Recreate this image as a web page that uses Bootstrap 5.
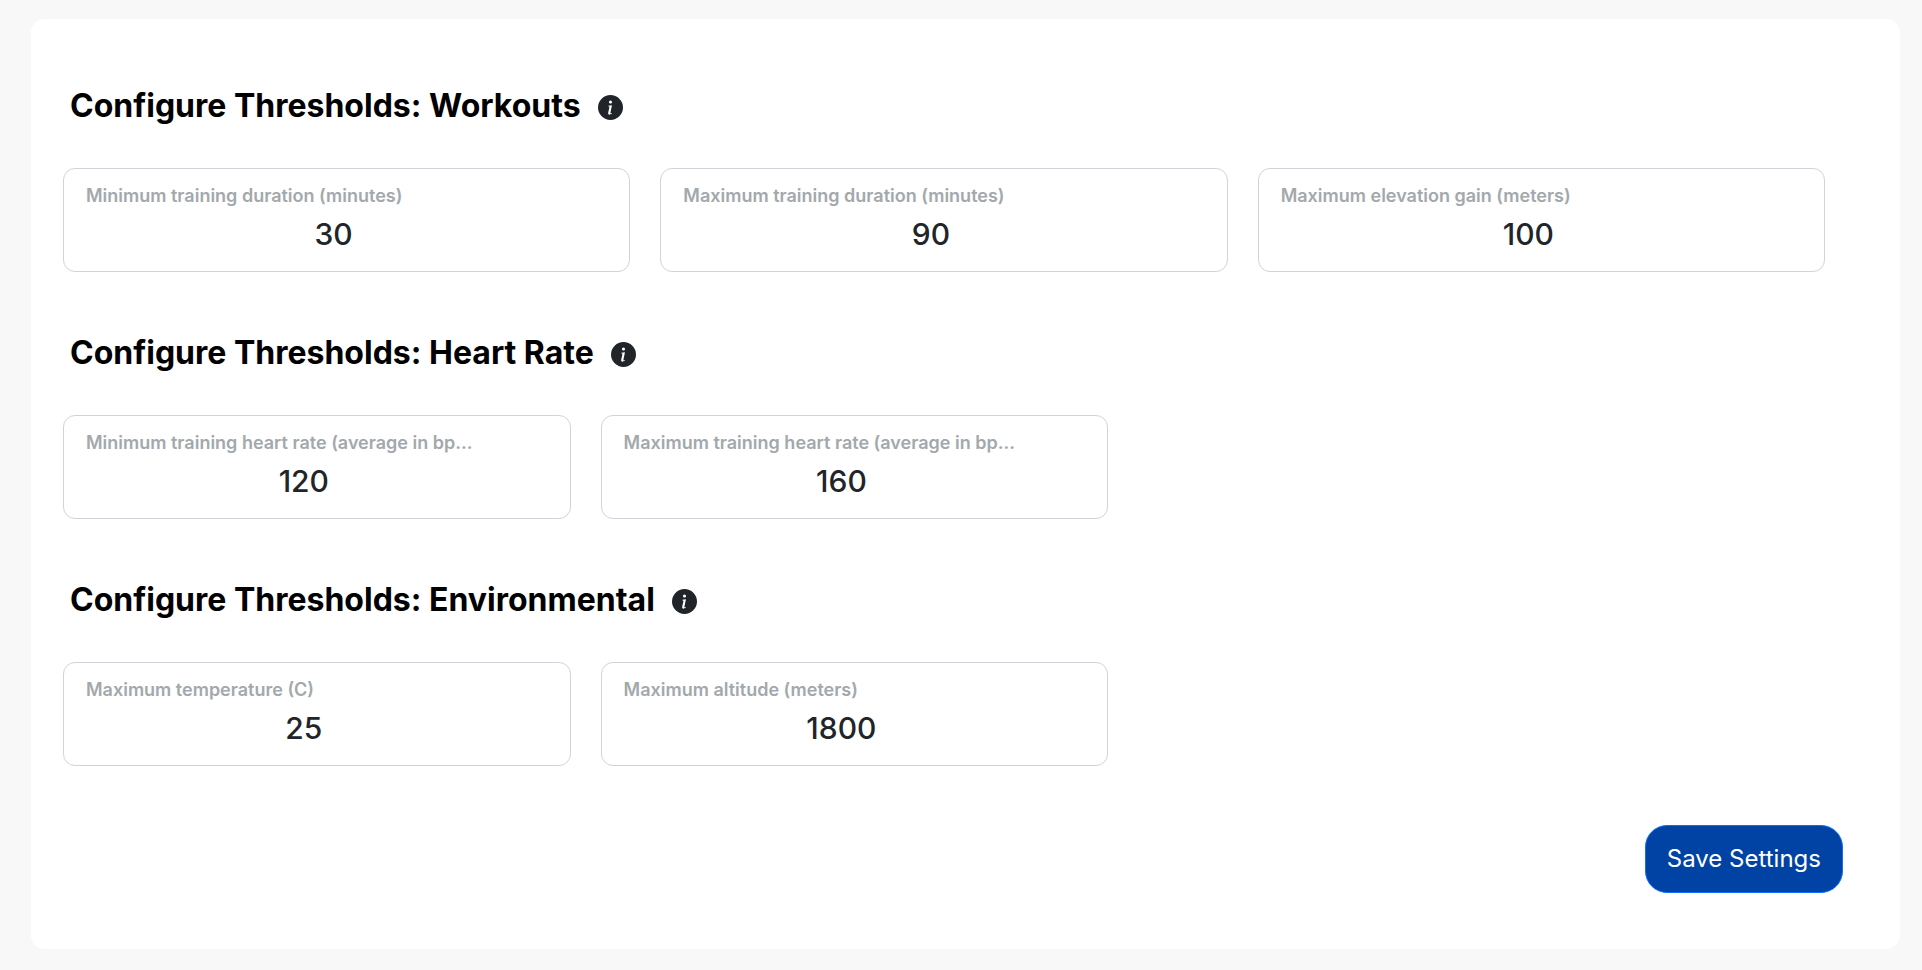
<!DOCTYPE html>
<html lang="en">
<head>
<meta charset="utf-8">
<meta name="viewport" content="width=device-width, initial-scale=1">
<title>Configure Thresholds</title>
<link href="https://cdn.jsdelivr.net/npm/bootstrap@5.3.0/dist/css/bootstrap.min.css" rel="stylesheet">
<style>
  body { background: #f8f8f8; font-family: Inter, "Liberation Sans", sans-serif; color: #212529; }
  .page { padding: 19px 22px 22px 31px; }
  .panel { background: #fff; border-radius: 14px; padding: 65px 57px 56px 32px; }
  .threshold-group { margin: 0 18px 59px 0; }
  .group-title { font-size: 32px; line-height: 44px; font-weight: 650; color: #000; margin: 0 7px 40px; gap: 17px; }
  .group-title svg { margin-top: 2px; }
  .threshold-row { --bs-gutter-x: 30px; --bs-gutter-y: 16px; }
  .field { border: 1px solid #ced4da; border-radius: 12px; padding: 15px 22px; }
  .field label { display: block; font-size: 18px; line-height: 24px; font-weight: 600; color: #a3a8ac; }
  .field input { font-size: 30px; line-height: 44px; height: 44px; font-weight: 500; color: #212529; margin-top: 4px; padding: 0 26px 0 0; border: 0; border-radius: 0; text-align: center; -moz-appearance: textfield; }
  .field input::-webkit-inner-spin-button { -webkit-appearance: none; margin: 0; }
  .btn-save { --bs-btn-bg: #0043a4; --bs-btn-border-color: #0d6efd; --bs-btn-padding-x: 21px; --bs-btn-padding-y: 15px; --bs-btn-border-radius: 22px; --bs-btn-font-size: 24px; --bs-btn-line-height: 36px; line-height: 36px; }
  @media (min-width: 992px) { .col-threshold { flex: 0 0 auto; width: 30%; } }
</style>
</head>
<body>
<svg class="d-none" xmlns="http://www.w3.org/2000/svg">
  <symbol id="info" viewBox="0 0 16 16"><path d="M8 16A8 8 0 1 0 8 0a8 8 0 0 0 0 16zm.93-9.412-1 4.705c-.07.34.029.533.304.533.194 0 .487-.07.686-.246l-.088.416c-.287.346-.92.598-1.465.598-.703 0-1.002-.422-.808-1.319l.738-3.468c.064-.293.006-.399-.287-.47l-.451-.081.082-.381 2.29-.287zM8 5.5a1 1 0 1 1 0-2 1 1 0 0 1 0 2z"/></symbol>
</svg>
<main class="page">
  <form class="panel">
    <section class="threshold-group">
      <h2 class="group-title d-flex align-items-center">Configure Thresholds: Workouts
        <svg class="text-dark" width="25" height="25" fill="currentColor" role="img" aria-label="Info"><use href="#info"/></svg></h2>
      <div class="row threshold-row">
        <div class="col-12 col-lg-4"><div class="field"><label class="text-truncate" for="minDuration">Minimum training duration (minutes)</label><input class="form-control" type="number" id="minDuration" value="30"></div></div>
        <div class="col-12 col-lg-4"><div class="field"><label class="text-truncate" for="maxDuration">Maximum training duration (minutes)</label><input class="form-control" type="number" id="maxDuration" value="90"></div></div>
        <div class="col-12 col-lg-4"><div class="field"><label class="text-truncate" for="maxElevation">Maximum elevation gain (meters)</label><input class="form-control" type="number" id="maxElevation" value="100"></div></div>
      </div>
    </section>
    <section class="threshold-group">
      <h2 class="group-title d-flex align-items-center">Configure Thresholds: Heart Rate
        <svg class="text-dark" width="25" height="25" fill="currentColor" role="img" aria-label="Info"><use href="#info"/></svg></h2>
      <div class="row threshold-row">
        <div class="col-12 col-threshold"><div class="field"><label class="text-truncate" for="minHeart">Minimum training heart rate (average in bp...</label><input class="form-control" type="number" id="minHeart" value="120"></div></div>
        <div class="col-12 col-threshold"><div class="field"><label class="text-truncate" for="maxHeart">Maximum training heart rate (average in bp...</label><input class="form-control" type="number" id="maxHeart" value="160"></div></div>
      </div>
    </section>
    <section class="threshold-group">
      <h2 class="group-title d-flex align-items-center">Configure Thresholds: Environmental
        <svg class="text-dark" width="25" height="25" fill="currentColor" role="img" aria-label="Info"><use href="#info"/></svg></h2>
      <div class="row threshold-row">
        <div class="col-12 col-threshold"><div class="field"><label class="text-truncate" for="maxTemp">Maximum temperature (C)</label><input class="form-control" type="number" id="maxTemp" value="25"></div></div>
        <div class="col-12 col-threshold"><div class="field"><label class="text-truncate" for="maxAltitude">Maximum altitude (meters)</label><input class="form-control" type="number" id="maxAltitude" value="1800"></div></div>
      </div>
    </section>
    <div class="d-flex justify-content-end"><button type="submit" class="btn btn-primary btn-save">Save Settings</button></div>
  </form>
</main>
<script src="https://cdn.jsdelivr.net/npm/bootstrap@5.3.0/dist/js/bootstrap.bundle.min.js"></script>
</body>
</html>
